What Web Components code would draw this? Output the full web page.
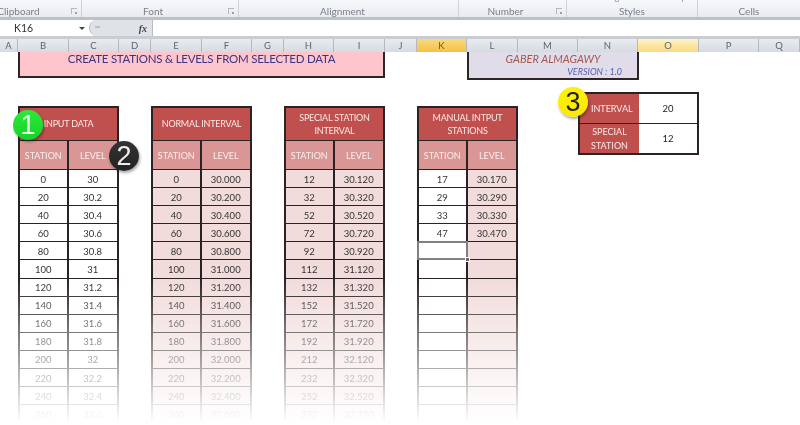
<!DOCTYPE html>
<html>
<head>
<meta charset="utf-8">
<title>Stations and levels sheet</title>
<style>
    html, body { margin: 0; height: 425px; overflow: hidden; background: #fff; }
    body { font-family: Lato, "Open Sans", sans-serif; }
</style>
</head>
<body>
<excel-window>
    <ribbon-bar slot="ribbon"></ribbon-bar>
    <formula-bar slot="formula" cell="K16"></formula-bar>
    <column-headers slot="columns"></column-headers>
    <sheet-area slot="sheet" id="sheet">
        <banner-box slot="banner-main" kind="pink">CREATE STATIONS &amp; LEVELS FROM SELECTED DATA</banner-box>
        <banner-box slot="banner-author" kind="author">
            <span>GABER ALMAGAWY</span>
            <span slot="version">VERSION : 1.0</span>
        </banner-box>
        <settings-table slot="settings"></settings-table>
        <data-table slot="t1" id="input" left-fill="#fff" right-fill="#fff">INPUT DATA</data-table>
        <data-table slot="t2" id="normal">NORMAL INTERVAL</data-table>
        <data-table slot="t3" id="special">SPECIAL STATION<br>INTERVAL</data-table>
        <data-table slot="t4" id="manual" left-fill="#fff" selected="4">MANUAL INTPUT<br>STATIONS</data-table>
        <step-badge slot="overlay" n="1" style="left:13px;top:58px" color="green"></step-badge>
        <step-badge slot="overlay" n="2" style="left:109px;top:89px" color="dark"></step-badge>
        <step-badge slot="overlay" n="3" style="left:558px;top:35px" color="yellow"></step-badge>
    </sheet-area>
</excel-window>

<template id="excel_window_tpl">
    <style>
        :host { display: flex; flex-direction: column; width: 800px; height: 425px; overflow: hidden; filter: blur(.3px); }
    </style>
    <slot name="ribbon"></slot>
    <slot name="formula"></slot>
    <slot name="columns"></slot>
    <slot name="sheet"></slot>
</template>

<template id="ribbon_bar_tpl">
    <style>
        :host {
            display: flex;
            height: 17px;
            background: linear-gradient(#f6f8fa, #e8ecf0);
            border-bottom: 3px solid #bcc1c6;
            color: #7b8086;
            font-size: 10px;
            box-sizing: content-box;
            overflow: hidden;
        }
        .group {
            position: relative;
            display: flex;
            align-items: flex-end;
            justify-content: center;
            border-right: 1px solid #cfd3d8;
            box-sizing: border-box;
            padding-bottom: 0;
        }
        .launcher {
            position: absolute;
            right: 4px;
            bottom: 3px;
            width: 6px;
            height: 6px;
            border-left: 1px solid #b5b9be;
            border-top: 1px solid #b5b9be;
            box-sizing: border-box;
        }
        .launcher::after {
            content: "";
            position: absolute;
            right: 0;
            bottom: 0;
            width: 2px;
            height: 2px;
            background: #9aa0a6;
        }
        .above {
            position: absolute;
            top: -9px;
            left: 7px;
            display: flex;
            gap: 10px;
            white-space: nowrap;
            font-size: 9.5px;
            color: #8a8f95;
        }
        .clip { margin-left: -44px; }
    </style>
    <div class="group" style="width:82px"><span class="clip">Clipboard</span><i class="launcher"></i></div>
    <div class="group" style="width:157px;padding-right:14px">Font<i class="launcher"></i></div>
    <div class="group" style="width:220px;padding-right:12px">Alignment</div>
    <div class="group" style="width:108px;padding-right:14px">Number<i class="launcher"></i></div>
    <div class="group" style="width:131px"><span class="above"><span>Formatting</span><span>as&nbsp;Table</span><span>Styles</span></span>Styles</div>
    <div class="group" style="width:102px;border-right:0">Cells</div>
</template>

<template id="formula_bar_tpl">
    <style>
        :host {
            display: flex;
            height: 16px;
            background: #fff;
            border-bottom: 3px solid #c9cdd2;
            font-size: 10.5px;
            color: #333;
        }
        .name { width: 89px; display: flex; align-items: center; padding-left: 14px; box-sizing: border-box; position: relative; }
        .name::after {
            content: "";
            position: absolute;
            right: 4px;
            top: 7px;
            border: 3px solid transparent;
            border-top: 3px solid #444;
        }
        .fx {
            position: relative;
            width: 64px;
            display: flex;
            align-items: center;
            justify-content: flex-end;
            padding-right: 5px;
            box-sizing: border-box;
            background: #dfe3e7;
            border-right: 1px solid #b8bcc1;
            border-left: 1px solid #b8bcc1;
            border-radius: 9px 0 0 9px;
            font: italic bold 10px "Liberation Serif", serif;
            color: #444;
        }
        .fx::before {
            content: "";
            position: absolute;
            left: 5px;
            top: 6px;
            width: 5px;
            height: 2px;
            background: #bcc1c6;
        }
    </style>
    <div class="name"><span id="cell"></span></div>
    <div class="fx">fx</div>
</template>

<template id="column_headers_tpl">
    <style>
        :host {
            display: grid;
            grid-template-columns: var(--sheet-cols);
            height: 13px;
            background: linear-gradient(#e9ecf0, #d6dbe1);
            font-size: 9.5px;
            color: #5c6570;
        }
        div { display: flex; align-items: center; justify-content: center; border-right: 1px solid #b4b9bf; box-sizing: border-box; }
        .on { background: linear-gradient(#f9d97e, #f5c143); color: #6b5a2a; }
        .soft { background: linear-gradient(#fff3c8, #fad97f); }
    </style>
</template>

<template id="sheet_area_tpl">
    <style>
        :host {
            display: grid;
            position: relative;
            flex: 1;
            grid-template-columns: var(--sheet-cols);
            grid-template-rows: 26px 14px 14px 1fr;
            overflow: hidden;
            background: #fff;
        }
        .main { grid-column: 2 / 10; grid-row: 1; display: grid; }
        .author { grid-column: 12 / 15; grid-row: 1; display: grid; margin-right: -1px; }
        .settings { grid-column: 14 / 16; grid-row: 3 / 5; }
        .t1 { grid-column: 2 / 4; grid-row: 4; }
        .t2 { grid-column: 5 / 7; grid-row: 4; }
        .t3 { grid-column: 8 / 10; grid-row: 4; }
        .t4 { grid-column: 11 / 13; grid-row: 4; }
        .fade {
            position: absolute;
            inset: 0;
            background: linear-gradient(transparent 226px, rgba(255,255,255,.35) 275px, rgba(255,255,255,.62) 315px, rgba(255,255,255,.88) 352px, #fff 371px);
            pointer-events: none;
        }
    </style>
    <div class="main"><slot name="banner-main"></slot></div>
    <div class="author"><slot name="banner-author"></slot></div>
    <div class="settings"><slot name="settings"></slot></div>
    <div class="t1"><slot name="t1"></slot></div>
    <div class="t2"><slot name="t2"></slot></div>
    <div class="t3"><slot name="t3"></slot></div>
    <div class="t4"><slot name="t4"></slot></div>
    <div class="fade"></div>
    <slot name="overlay"></slot>
</template>

<template id="banner_box_tpl">
    <style>
        :host {
            display: flex;
            flex-direction: column;
            box-sizing: border-box;
            border: 2px solid #2e2426;
            border-top: 0;
            text-align: center;
        }
        :host([kind="pink"]) {
            background: #ffc5cd;
            color: #3a3580;
            font-size: 11.5px;
            letter-spacing: -.25px;
            line-height: 14px;
        }
        :host([kind="author"]) {
            background: #e0dcea;
            color: #a8564c;
            font-size: 11px;
            font-style: italic;
            line-height: 14px;
        }
        .ver { display: block; text-align: right; padding-right: 15px; font-size: 9px; color: #5b5fae; line-height: 12px; }
    </style>
    <div><slot></slot></div>
    <div class="ver"><slot name="version"></slot></div>
</template>

<template id="settings_table_tpl">
    <style>
        :host {
            display: grid;
            grid-template-columns: 59px 58px;
            grid-template-rows: 30px 29px;
            width: 121px;
            height: 63px;
            box-sizing: border-box;
            border: 2px solid #2a2224;
            font-size: 9px;
            line-height: 13.5px;
            text-align: center;
        }
        div { display: flex; align-items: center; justify-content: center; box-sizing: border-box; }
        .k { background: #c0504d; color: #fbe9e8; }
        .v { color: #222; font-size: 9.5px; }
        .top { border-bottom: 1px solid #2a2224; }
    </style>
    <div class="k top">&nbsp;&nbsp;INTERVAL</div>
    <div class="v top">20</div>
    <div class="k">SPECIAL<br>STATION</div>
    <div class="v">12</div>
</template>

<template id="data_table_tpl">
    <style>
        :host {
            display: block;
            box-sizing: border-box;
            font-size: 9.5px;
            text-align: center;
            color: #333;
        }
        .title {
            display: flex;
            align-items: center;
            justify-content: center;
            height: 35px;
            box-sizing: border-box;
            background: #c0504d;
            color: #fbe9e8;
            font-size: 9px;
            letter-spacing: -.2px;
            line-height: 13.5px;
            border: 2px solid #2a2224;
            border-bottom-width: 1px;
        }
        .heads, .row {
            display: grid;
            grid-template-columns: 1fr 1fr;
            border-left: 2px solid #2a2224;
            border-right: 2px solid #2a2224;
            box-sizing: border-box;
        }
        .heads { height: 29px; border-bottom: 1px solid #2a2224; background: #d99694; color: #fbeeee; font-size: 9px; }
        .row { height: 18.1px; border-bottom: 1px solid #2a2224; }
        .heads div, .row div { display: flex; align-items: center; justify-content: center; position: relative; box-sizing: border-box; }
        .row div { padding-top: 1px; }
        .heads div:first-child, .row div:first-child { border-right: 2px solid #2a2224; }
        .row div.sel {
            margin: -1px 0 -1px -2px;
            border: 2px solid #808080;
            z-index: 1;
        }
        .sel::after {
            content: "";
            position: absolute;
            right: -4px;
            bottom: -4px;
            width: 3px;
            height: 3px;
            background: #666;
            border: 1px solid #fff;
        }
    </style>
    <div class="title"><span><slot></slot></span></div>
    <div class="heads"><div>STATION</div><div>LEVEL</div></div>
    <div id="rows"></div>
</template>

<template id="step_badge_tpl">
    <style>
        :host {
            position: absolute;
            display: flex;
            align-items: center;
            justify-content: center;
            width: 30px;
            height: 30px;
            border-radius: 50%;
            font: 27px/30px "Liberation Sans", sans-serif;
            box-shadow: 1px 2px 3px rgba(0,0,0,.35);
        }
        :host([color="green"]) { background: linear-gradient(#2ee83c, #12d426); color: #e9ffe9; }
        :host([color="dark"]) { background: linear-gradient(#333, #232323); color: #eee; }
        :host([color="yellow"]) { background: linear-gradient(#fff200, #fbe900); color: #222; }
    </style>
    <span id="n"></span>
</template>

<script type="module">
    const COLS = '18px 51px 50px 32px 51px 50px 32px 50px 51px 32px 50px 51px 60px 60px 61px 60px 41px';
    document.documentElement.style.setProperty('--sheet-cols', COLS);

    class TemplatedElement extends HTMLElement {
        constructor(tplId) {
            super();
            this.attachShadow({mode: 'open'});
            this.shadowRoot.appendChild(document.getElementById(tplId).content.cloneNode(true));
        }
    }

    customElements.define('excel-window', class extends TemplatedElement { constructor() { super('excel_window_tpl'); } });
    customElements.define('ribbon-bar', class extends TemplatedElement { constructor() { super('ribbon_bar_tpl'); } });
    customElements.define('sheet-area', class extends TemplatedElement { constructor() { super('sheet_area_tpl'); } });
    customElements.define('banner-box', class extends TemplatedElement { constructor() { super('banner_box_tpl'); } });
    customElements.define('settings-table', class extends TemplatedElement { constructor() { super('settings_table_tpl'); } });

    customElements.define('formula-bar', class extends TemplatedElement {
        constructor() { super('formula_bar_tpl'); }
        connectedCallback() {
            this.shadowRoot.getElementById('cell').textContent = this.getAttribute('cell');
        }
    });

    customElements.define('column-headers', class extends TemplatedElement {
        constructor() { super('column_headers_tpl'); }
        connectedCallback() {
            'ABCDEFGHIJKLMNOPQ'.split('').forEach((letter) => {
                const cell = document.createElement('div');
                cell.textContent = letter;
                if (letter === 'K') cell.className = 'on';
                if (letter === 'O') cell.className = 'soft';
                this.shadowRoot.appendChild(cell);
            });
        }
    });

    customElements.define('step-badge', class extends TemplatedElement {
        constructor() { super('step_badge_tpl'); }
        connectedCallback() {
            this.shadowRoot.getElementById('n').textContent = this.getAttribute('n');
        }
    });

    customElements.define('data-table', class extends TemplatedElement {
        constructor() { super('data_table_tpl'); }
        set rows(list) {
            const box = this.shadowRoot.getElementById('rows');
            const leftFill = this.getAttribute('left-fill') || '#f2dcdb';
            const rightFill = this.getAttribute('right-fill') || '#f2dcdb';
            const selected = Number(this.getAttribute('selected') ?? -1);
            list.forEach(([a, b], i) => {
                const row = document.createElement('div');
                row.className = 'row';
                const left = document.createElement('div');
                const right = document.createElement('div');
                left.textContent = a;
                right.textContent = b;
                left.style.background = leftFill;
                right.style.background = rightFill;
                if (i === selected) left.classList.add('sel');
                row.append(left, right);
                box.appendChild(row);
            });
        }
    });

    const count = 14;
    const seq = (fn) => Array.from({length: count}, (_, i) => fn(i));
    document.getElementById('input').rows = seq(i => [20 * i, String(Math.round((30 + 0.2 * i) * 10) / 10)]);
    document.getElementById('normal').rows = seq(i => [20 * i, (30 + 0.2 * i).toFixed(3)]);
    document.getElementById('special').rows = seq(i => [12 + 20 * i, (30.12 + 0.2 * i).toFixed(3)]);
    const manual = [['17', '30.170'], ['29', '30.290'], ['33', '30.330'], ['47', '30.470']];
    document.getElementById('manual').rows = seq(i => manual[i] || ['', '']);
</script>
</body>
</html>
